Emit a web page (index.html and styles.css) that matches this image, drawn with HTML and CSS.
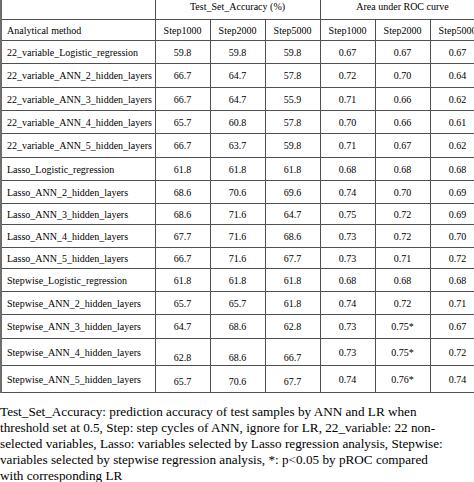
FILE: index.html
```html
<!DOCTYPE html>
<html>
<head>
<meta charset="utf-8">
<link rel="stylesheet" href="styles.css">
</head>
<body>
<div class="page">
<table class="results">
  <colgroup>
    <col class="c-method">
    <col class="c-num"><col class="c-num"><col class="c-num">
    <col class="c-num"><col class="c-num"><col class="c-num">
  </colgroup>
  <thead>
    <tr class="group-row">
      <th class="method"></th>
      <th colspan="3">Test_Set_Accuracy (%)</th>
      <th colspan="3">Area under ROC curve</th>
    </tr>
    <tr class="step-row">
      <th class="method">Analytical method</th>
      <th>Step1000</th><th>Step2000</th><th>Step5000</th>
      <th>Step1000</th><th>Step2000</th><th>Step5000</th>
    </tr>
  </thead>
  <tbody>
    <tr><td class="method">22_variable_Logistic_regression</td><td>59.8</td><td>59.8</td><td>59.8</td><td>0.67</td><td>0.67</td><td>0.67</td></tr>
    <tr class="loose"><td class="method">22_variable_ANN_2_hidden_layers</td><td>66.7</td><td>64.7</td><td>57.8</td><td>0.72</td><td>0.70</td><td>0.64</td></tr>
    <tr><td class="method">22_variable_ANN_3_hidden_layers</td><td>66.7</td><td>64.7</td><td>55.9</td><td>0.71</td><td>0.66</td><td>0.62</td></tr>
    <tr><td class="method">22_variable_ANN_4_hidden_layers</td><td>65.7</td><td>60.8</td><td>57.8</td><td>0.70</td><td>0.66</td><td>0.61</td></tr>
    <tr class="loose"><td class="method">22_variable_ANN_5_hidden_layers</td><td>66.7</td><td>63.7</td><td>59.8</td><td>0.71</td><td>0.67</td><td>0.62</td></tr>
    <tr><td class="method">Lasso_Logistic_regression</td><td>61.8</td><td>61.8</td><td>61.8</td><td>0.68</td><td>0.68</td><td>0.68</td></tr>
    <tr><td class="method">Lasso_ANN_2_hidden_layers</td><td>68.6</td><td>70.6</td><td>69.6</td><td>0.74</td><td>0.70</td><td>0.69</td></tr>
    <tr class="short"><td class="method">Lasso_ANN_3_hidden_layers</td><td>68.6</td><td>71.6</td><td>64.7</td><td>0.75</td><td>0.72</td><td>0.69</td></tr>
    <tr><td class="method">Lasso_ANN_4_hidden_layers</td><td>67.7</td><td>71.6</td><td>68.6</td><td>0.73</td><td>0.72</td><td>0.70</td></tr>
    <tr class="short"><td class="method">Lasso_ANN_5_hidden_layers</td><td>66.7</td><td>71.6</td><td>67.7</td><td>0.73</td><td>0.71</td><td>0.72</td></tr>
    <tr><td class="method">Stepwise_Logistic_regression</td><td>61.8</td><td>61.8</td><td>61.8</td><td>0.68</td><td>0.68</td><td>0.68</td></tr>
    <tr><td class="method">Stepwise_ANN_2_hidden_layers</td><td>65.7</td><td>65.7</td><td>61.8</td><td>0.74</td><td>0.72</td><td>0.71</td></tr>
    <tr class="loose"><td class="method">Stepwise_ANN_3_hidden_layers</td><td>64.7</td><td>68.6</td><td>62.8</td><td>0.73</td><td>0.75*</td><td>0.67</td></tr>
    <tr class="tall"><td class="method">Stepwise_ANN_4_hidden_layers</td><td class="drop">62.8</td><td class="drop">68.6</td><td class="drop">66.7</td><td>0.73</td><td>0.75*</td><td>0.72</td></tr>
    <tr class="tall"><td class="method">Stepwise_ANN_5_hidden_layers</td><td class="drop-sm">65.7</td><td class="drop-sm">70.6</td><td class="drop-sm">67.7</td><td>0.74</td><td>0.76*</td><td>0.74</td></tr>
  </tbody>
</table>
<p class="note">
  <span class="line">Test_Set_Accuracy: prediction accuracy of test samples by ANN and LR when</span>
  <span class="line">threshold set at 0.5, Step: step cycles of ANN, ignore for LR, 22_variable: 22 non-</span>
  <span class="line">selected variables, Lasso: variables selected by Lasso regression analysis, Stepwise:</span>
  <span class="line">variables selected by stepwise regression analysis, *: p&lt;0.05 by pROC compared</span>
  <span class="line">with corresponding LR</span>
</p>
</div>
</body>
</html>
```

FILE: styles.css
```css
html, body {
  margin: 0;
  padding: 0;
  background: #ffffff;
}
body {
  width: 474px;
  height: 482px;
  overflow: hidden;
  font-family: "Liberation Serif", "Times New Roman", serif;
  color: #000000;
}
.page {
  width: 474px;
  overflow: hidden;
}
.results {
  border-collapse: collapse;
  table-layout: fixed;
  width: 483px;
  margin-top: -7px;
  font-family: "Liberation Serif", "Times New Roman", serif;
  font-size: 10px;
}
.c-method { width: 154px; }
.c-num { width: 55px; }
.results th,
.results td {
  border: 1px solid #505050;
  padding: 0;
  text-align: center;
  vertical-align: middle;
  font-weight: normal;
  white-space: nowrap;
  overflow: hidden;
}
.results .method {
  text-align: left;
  padding-left: 5px;
  border-left: 2px solid #6e6e6e;
}
.group-row { height: 26px; }
.step-row { height: 21px; }
tbody tr { height: 23px; }
tbody tr.loose { height: 24px; }
tbody tr.short { height: 21px; }
tbody tr.tall { height: 27px; }
.results td.drop { padding-top: 10px; }
.results td.drop-sm { padding-top: 5px; }
.note {
  margin: 11px 0 0 0;
  font-size: 13.2px;
  line-height: 16px;
}
.note .line {
  display: block;
  white-space: nowrap;
}
```
